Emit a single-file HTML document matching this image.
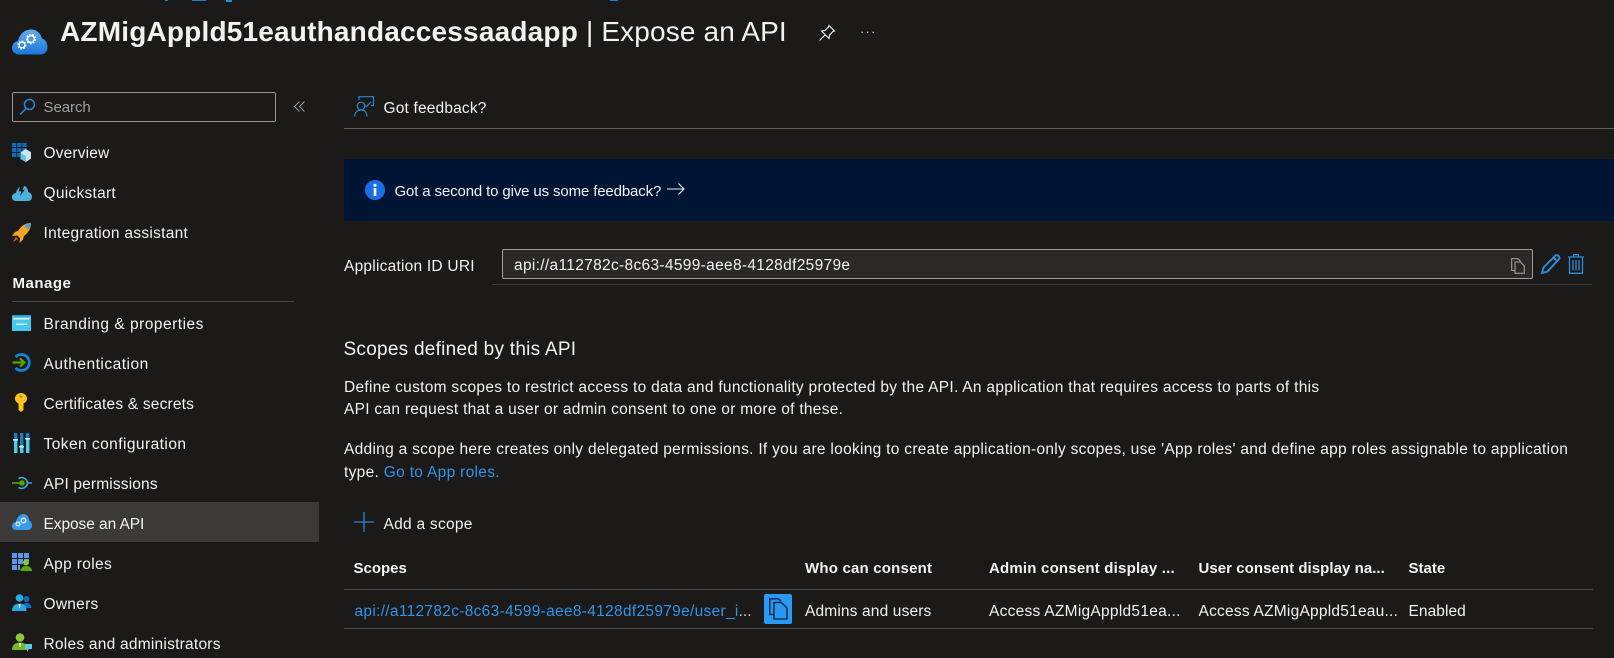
<!DOCTYPE html>
<html><head><meta charset="utf-8"><style>
html,body{margin:0;padding:0;background:#1b1a19}
#p{position:relative;width:1614px;height:658px;overflow:hidden;background:#1b1a19;color:#f3f2f1;font-family:"Liberation Sans",sans-serif;font-size:15.5px}
.t{position:absolute;white-space:nowrap;line-height:20px;height:20px}
.b{font-weight:bold;font-size:15px}
.l{position:absolute;height:1px;background:#484644}
svg{position:absolute;overflow:visible}
</style></head><body><div id="p">
<div style="position:absolute;left:165px;top:0;width:3px;height:1px;background:#1b7fd0"></div>
<div style="position:absolute;left:192px;top:0;width:14px;height:1px;background:#1b7fd0"></div>
<div style="position:absolute;left:226px;top:0;width:6px;height:2px;background:#1b8fe0"></div>
<div style="position:absolute;left:610px;top:0;width:8px;height:1px;background:#1b7fd0"></div>

<svg style="left:12px;top:29px" width="36" height="26" viewBox="0 0 36 26"><defs><linearGradient id="g" x1="0" y1="0" x2="0" y2="1"><stop offset="0" stop-color="#62adf2"/><stop offset="1" stop-color="#1a78d8"/></linearGradient></defs><path d="M7 25.500C3 25.500 0 22.500 0 19C0 15.500 2.500 12.500 6 12C7.500 5 13 .5 19 .5C24.500 .5 28.500 4 30 9.500C33.500 10.500 35.500 14 35.500 18C35.500 22.500 32.500 25.500 28.500 25.500Z" fill="url(#g)"/><circle cx="19" cy="10" r="4" fill="none" stroke="#fff" stroke-width="2.400" stroke-dasharray="1.800 1"/><circle cx="19" cy="10" r="3.400" fill="none" stroke="#fff" stroke-width="1.200"/><circle cx="10" cy="16" r="3.400" fill="none" stroke="#fff" stroke-width="2.200" stroke-dasharray="1.600 1"/><circle cx="10" cy="16" r="2.800" fill="none" stroke="#fff" stroke-width="1.200"/></svg>
<div class="t" style="font-weight:bold;left:60px;top:14px;height:36px;line-height:36px;font-size:28px;letter-spacing:.19px">AZMigAppld51eauthandaccessaadapp</div>
<div class="t" style="left:586px;top:14px;height:36px;line-height:36px;font-size:28px;letter-spacing:.14px">| Expose an API</div>
<svg style="left:818px;top:24px" width="18" height="18" viewBox="0 0 18 18" fill="none" stroke="#f3f2f1" stroke-width="1.100"><path d="M11 1.500L16.500 7L15 7.500L11.500 11L11 14.500L3.500 7L7 6.500L10.500 3Z"/><path d="M7 11L1.500 16.500"/></svg>
<div class="t" style="left:860px;top:22px;letter-spacing:1.200px;font-size:13px;color:#d0d0d0">···</div>

<div style="position:absolute;left:12px;top:92px;width:262px;height:28px;border:1px solid #979593;border-radius:2px"></div>
<svg style="left:19px;top:98px" width="17" height="18" viewBox="0 0 17 18" fill="none" stroke="#2a84d2" stroke-width="1.500"><circle cx="10.500" cy="6.500" r="5"/><path d="M7 10.500L1 16.500"/></svg>
<div class="t" style="left:43.500px;top:98px;color:#a19f9d;font-size:15px;letter-spacing:-.06px">Search</div>
<svg style="left:294px;top:101px" width="11" height="11" viewBox="0 0 11 11" fill="none" stroke="#a19f9d"><path d="M5.500 .5L.5 5.500L5.500 10.500M10.500 .5L5.500 5.500L10.500 10.500"/></svg>

<svg style="left:12px;top:143px" width="19" height="19" viewBox="0 0 19 19"><path d="M0 0h4.300v4H0zM5.200 0h4.300v4H5.200zM10.400 0h4.300v4h-4.300zM0 5h4.300v4H0zM5.200 5h4.300v4H5.200zM10.400 5h4.300v4h-4.300zM0 10h4.300v4H0zM5.200 10h3v4H5.200z" fill="#0f6cbd"/><path d="M13.500 6L19 9V15.500L14 19L8.500 16V9.500Z" fill="#c8e8f4"/><path d="M8.500 10L14 13V19L8.500 16Z" fill="#6cc0e0"/></svg>
<div class="t" style="left:43.500px;top:143.500px;letter-spacing:.16px">Overview</div>
<svg style="left:12px;top:185px" width="20" height="16" viewBox="0 0 20 16"><path d="M4 16C1 16 0 14 0 12C0 9.500 2 8 4 8C4.500 5 6 3 8 2L6.500 6.500L9.500 6L8 11L13 4.500L10.500 5L12 1C15 1.500 16 4 16 7C18.500 7.500 20 9.500 20 12C20 14.500 18 16 16 16Z" fill="#50b0dc"/></svg>
<div class="t" style="left:43.500px;top:183.500px;letter-spacing:.27px">Quickstart</div>
<svg style="left:12px;top:222px" width="20" height="21" viewBox="0 0 20 21"><path d="M19 1C13 1 9 4 6 9L3 10L0 14L5 13.500L8 16L7.500 21L11 17.500L12 14C16 11 19 7 19 1Z" fill="#f5a623"/><path d="M19 1C16 1.500 14 2.500 12.500 4L16 7.500C17.500 6 18.500 4 19 1Z" fill="#4aa0d8"/><path d="M4 15L1 20L6 17Z" fill="#e8620c"/></svg>
<div class="t" style="left:43.500px;top:223.500px;letter-spacing:.28px">Integration assistant</div>

<div class="t b" style="left:12.500px;top:273.500px;letter-spacing:.5px">Manage</div>
<div class="l" style="left:12px;top:301px;width:282px"></div>

<svg style="left:12px;top:315px" width="19" height="16" viewBox="0 0 19 16"><rect width="19" height="16" fill="#45c8ef"/><rect width="19" height="1.500" fill="#1c9ad0"/><rect x="1.500" y="3" width="16" height="1.500" fill="#e8f8fd"/><rect x="4" y="8.500" width="11" height="1.500" fill="#d8f3fb"/></svg>
<div class="t" style="left:43.500px;top:314.500px;letter-spacing:.5px">Branding &amp; properties</div>
<svg style="left:12px;top:353px" width="19" height="19" viewBox="0 0 19 19" fill="none"><path d="M3.500 4A8 8 0 1 1 3.500 15" stroke="#1382dc" stroke-width="2.800"/><path d="M0.500 9.500H12M8 5.500L12.500 9.500L8 13.500" stroke="#57a300" stroke-width="2.200"/></svg>
<div class="t" style="left:43.500px;top:354.500px;letter-spacing:.5px">Authentication</div>
<svg style="left:14px;top:393px" width="14" height="19" viewBox="0 0 14 19"><path d="M7 0C10.500 0 13 2.500 13 5.500C13 8 11.500 9.500 9.500 10.500V17L7 19L4.500 17V10.500C2.500 9.500 1 8 1 5.500C1 2.500 3.500 0 7 0Z" fill="#fcc419"/><rect x="5.500" y="2.500" width="3" height="2" rx="1" fill="#a87808"/></svg>
<div class="t" style="left:43.500px;top:394.500px;letter-spacing:.19px">Certificates &amp; secrets</div>
<svg style="left:13px;top:433px" width="17" height="20" viewBox="0 0 17 20"><path d="M1 0h3.400v20H1zM7 0h3.400v20H7zM13 0h3.400v20H13z" fill="#0f7fc8"/><path d="M1 7h3.400v13H1zM7 12h3.400v8H7zM13 6h3.400v14H13z" fill="#50c8ef"/><path d="M0 6h5v1.500H0zM6 13h5v1.500H6zM12 5h5v1.500h-5z" fill="#e8f8fd"/></svg>
<div class="t" style="left:43.500px;top:434.500px;letter-spacing:.45px">Token configuration</div>
<svg style="left:12px;top:475px" width="20" height="16" viewBox="0 0 20 16" fill="none"><path d="M16 8H20" stroke="#37b0d8" stroke-width="1.400"/><path d="M6.500 3.500A6 6 0 0 1 15.500 8A6 6 0 0 1 6.500 12.500" stroke="#37b0d8" stroke-width="1.600"/><path d="M0 8H10" stroke="#57a300" stroke-width="1.600"/><circle cx="10" cy="8" r="2.800" fill="#57a300"/></svg>
<div class="t" style="left:43.500px;top:474.500px;letter-spacing:.15px">API permissions</div>

<div style="position:absolute;left:0;top:502px;width:319px;height:40px;background:#3b3a39"></div>
<svg style="left:12px;top:514px" width="20" height="16" viewBox="0 0 20 16"><path d="M4 16C1.500 16 0 14 0 12C0 9.500 2 8 4 8C4.500 3.500 8 0 11.500 0C15 0 17 3 17 6.500C18.800 7.300 20 9.500 20 11.500C20 14 18 16 16 16Z" fill="#3a9bee"/><circle cx="11.500" cy="6.500" r="2.300" fill="none" stroke="#d8ecfc" stroke-width="1.500"/><circle cx="6" cy="10" r="1.900" fill="none" stroke="#d8ecfc" stroke-width="1.300"/></svg>
<div class="t" style="left:43.500px;top:514.500px;letter-spacing:-.07px">Expose an API</div>

<svg style="left:12px;top:553px" width="20" height="18" viewBox="0 0 20 18"><path d="M0 0h5v5H0zM6 0h5v5H6zM12 0h5v5h-5zM0 6h5v5H0zM6 6h5v5H6zM12 6h5v2h-5zM0 12h5v5H0zM6 12h2v5H6z" fill="#5a9ae8"/><circle cx="14" cy="9.500" r="3" fill="#8cc83c"/><path d="M8.500 18C8.500 14.500 11 13 14 13C17 13 20 14.500 20 18Z" fill="#5ea80f"/></svg>
<div class="t" style="left:43.500px;top:554.500px;letter-spacing:.34px">App roles</div>
<svg style="left:12px;top:594px" width="20" height="17" viewBox="0 0 20 17"><circle cx="14.500" cy="5" r="3" fill="#0f6cbd"/><path d="M10 14C10 10.500 12 9 14.500 9C17 9 19.500 10.500 19.500 14Z" fill="#0f6cbd"/><circle cx="7.500" cy="4" r="3.800" fill="#2aa8e0"/><path d="M0 17C0 12 3 9.500 7.500 9.500C12 9.500 14.500 12 14.500 17Z" fill="#2aa8e0"/><path d="M6.500 10H8.500L8 14H7Z" fill="#d8f3fb"/></svg>
<div class="t" style="left:43.500px;top:594.500px;letter-spacing:.27px">Owners</div>
<svg style="left:12px;top:633px" width="20" height="19" viewBox="0 0 20 19"><circle cx="8" cy="4.500" r="4.300" fill="#8cc83c"/><path d="M0 17C0 12 3 9.500 8 9.500C13 9.500 15 12 15 17Z" fill="#76b82a"/><path d="M7 10H9L8.500 14H7.500Z" fill="#e8f8d8"/><path d="M13 11H20V16H17L15 19V16H13Z" fill="#5ccbe8"/></svg>
<div class="t" style="left:43.500px;top:634.500px;letter-spacing:.24px">Roles and administrators</div>

<svg style="left:354px;top:96px" width="20" height="21" viewBox="0 0 20 21" fill="none" stroke="#2a84d2" stroke-width="1.200"><path d="M5 4V.7H19.500V9.500H17"/><path d="M10.500 8.500L12.500 10.500L17 6"/><circle cx="7" cy="10" r="3.800"/><path d="M.7 20.500C.7 16.500 3.500 14 7 14C10.500 14 13 16.500 13 20.500"/></svg>
<div class="t" style="left:383.500px;top:99px;letter-spacing:.17px">Got feedback?</div>
<div class="l" style="left:344px;top:128px;width:1270px;background:#605e5c"></div>

<div style="position:absolute;left:344px;top:159px;width:1270px;height:62px;background:#001433"></div>
<svg style="left:365px;top:180px" width="20" height="20" viewBox="0 0 20 20"><circle cx="10" cy="10" r="10" fill="#1a6fe8"/><rect x="8.700" y="8" width="2.600" height="8" fill="#fff"/><circle cx="10" cy="5.300" r="1.600" fill="#fff"/></svg>
<div class="t" style="left:394.500px;top:181.500px;font-size:15px;letter-spacing:-.135px">Got a second to give us some feedback?</div>
<svg style="left:667px;top:183px" width="18" height="12" viewBox="0 0 18 12" fill="none" stroke="#f3f2f1" stroke-width="1.100"><path d="M0 6H17M11.500 .5L17 6L11.500 11.500"/></svg>

<div class="t" style="left:344px;top:256.500px;letter-spacing:.23px">Application ID URI</div>
<div style="position:absolute;left:502px;top:249px;width:1029px;height:28px;border:1px solid #a19f9d;border-radius:2px;background:#2a2928"></div>
<div class="t" style="left:514px;top:255.500px;letter-spacing:.32px">api://a112782c-8c63-4599-aee8-4128df25979e</div>
<div class="l" style="left:492px;top:284px;width:1100px;background:#3b3a39"></div>
<svg style="left:1511px;top:258px" width="14" height="16" viewBox="0 0 14 16" fill="none" stroke="#a19f9d" stroke-width="1.100"><path d="M4 12.500H.7V.7H7L9.500 3.200"/><path d="M4 4H9.500L13.300 8V15.300H4Z"/></svg>
<svg style="left:1541px;top:254px" width="20" height="20" viewBox="0 0 20 20" fill="none" stroke="#2a8ee0" stroke-width="1.900"><path d="M1 19L2.500 13.500L14.500 1.500C16 .3 18.500 2 18.500 4.500L6.500 17.500Z"/><path d="M12.500 3.500L16.500 7.500"/></svg>
<svg style="left:1568px;top:254px" width="16" height="20" viewBox="0 0 16 20" fill="none" stroke="#2a8ee0" stroke-width="1.300"><path d="M0 3H16M5.500 3V.7H10.500V3M1.500 3V19.300H14.500V3M5 6V16.500M8 6V16.500M11 6V16.500"/></svg>

<div class="t" style="left:343.500px;top:339px;height:22px;line-height:22px;font-size:19px;letter-spacing:.26px">Scopes defined by this API</div>
<div class="t" style="left:344px;top:377.500px;letter-spacing:.29px">Define custom scopes to restrict access to data and functionality protected by the API. An application that requires access to parts of this</div>
<div class="t" style="left:344px;top:399.500px;letter-spacing:.28px">API can request that a user or admin consent to one or more of these.</div>
<div class="t" style="left:344px;top:440px;letter-spacing:.29px">Adding a scope here creates only delegated permissions. If you are looking to create application-only scopes, use 'App roles' and define app roles assignable to application</div>
<div class="t" style="left:344px;top:462.500px;letter-spacing:.31px">type. <span style="color:#2f93e8">Go to App roles.</span></div>

<svg style="left:354px;top:512px" width="20" height="20" viewBox="0 0 20 20" stroke="#2a84d2" stroke-width="1.300"><path d="M10 0V20M0 10H20"/></svg>
<div class="t" style="left:383.500px;top:514.500px;letter-spacing:.27px">Add a scope</div>

<div class="t b" style="left:353.500px;top:558.500px">Scopes</div>
<div class="t b" style="left:805px;top:558.500px;letter-spacing:.2px">Who can consent</div>
<div class="t b" style="left:989px;top:558.500px;letter-spacing:.2px">Admin consent display ...</div>
<div class="t b" style="left:1198.500px;top:558.500px;letter-spacing:.05px">User consent display na...</div>
<div class="t b" style="left:1408.500px;top:558.500px">State</div>
<div class="l" style="left:344px;top:589px;width:1249px"></div>
<div class="t" style="left:354.500px;top:601.500px;color:#2f93e8;letter-spacing:.3px">api://a112782c-8c63-4599-aee8-4128df25979e/user_i<span style="color:#d0d0d0;letter-spacing:0">...</span></div>
<div style="position:absolute;left:764px;top:594px;width:28px;height:30px;background:#2899f5;border-radius:2px"></div>
<svg style="left:769px;top:598px" width="19" height="22" viewBox="0 0 19 22" fill="none" stroke="#15324f" stroke-width="1.600"><path d="M5 16.500H.8V.8H9.500L12 3.300"/><path d="M5 4.500H12.500L18 10V21H5Z"/></svg>
<div class="t" style="left:805px;top:601.500px;letter-spacing:.15px">Admins and users</div>
<div class="t" style="left:989px;top:601.500px;letter-spacing:.27px">Access AZMigAppld51ea...</div>
<div class="t" style="left:1198.500px;top:601.500px;letter-spacing:.23px">Access AZMigAppld51eau...</div>
<div class="t" style="left:1408.500px;top:601.500px;letter-spacing:.07px">Enabled</div>
<div class="l" style="left:344px;top:628px;width:1249px"></div>
</div></body></html>
